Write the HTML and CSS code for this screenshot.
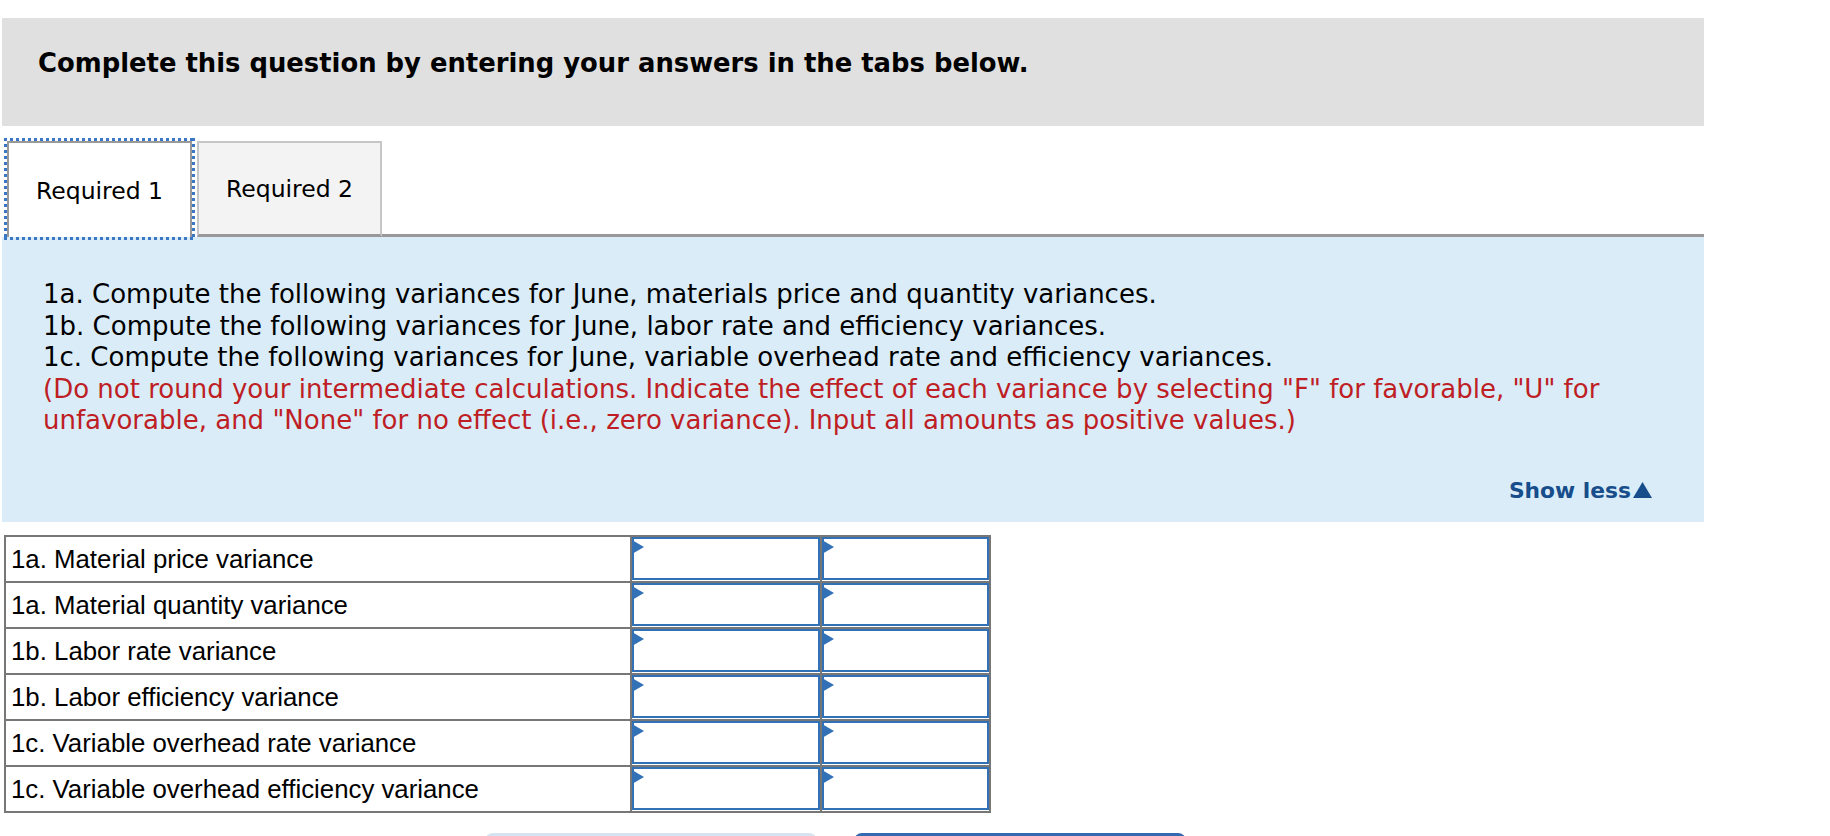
FILE: index.html
```html
<!DOCTYPE html>
<html>
<head>
<meta charset="utf-8">
<link rel="stylesheet" href="styles.css">
</head>
<body>
<div class="page">
  <div class="banner">
    <h1 class="banner-title">Complete this question by entering your answers in the tabs below.</h1>
  </div>

  <div class="tabs">
    <div class="tab tab-active"><span>Required 1</span></div>
    <div class="tab tab-inactive"><span>Required 2</span></div>
    <div class="tab-fill"></div>
  </div>

  <div class="panel">
    <div class="instructions">
      <p class="line">1a. Compute the following variances for June, materials price and quantity variances.</p>
      <p class="line">1b. Compute the following variances for June, labor rate and efficiency variances.</p>
      <p class="line">1c. Compute the following variances for June, variable overhead rate and efficiency variances.</p>
      <p class="line note">(Do not round your intermediate calculations. Indicate the effect of each variance by selecting "F" for favorable, "U" for unfavorable, and "None" for no effect (i.e., zero variance). Input all amounts as positive values.)</p>
    </div>
    <div class="show-less-row">
      <span class="show-less">Show less<svg class="arrow" width="19" height="16" viewBox="0 0 19 16"><polygon points="9.5,0 19,16 0,16" fill="#174d8a"/></svg></span>
    </div>
  </div>

  <table class="grid">
    <colgroup>
      <col class="c-label">
      <col class="c-amount">
      <col class="c-effect">
    </colgroup>
    <tbody>
      <tr><td class="label">1a. Material price variance</td><td class="input"><div class="box"><span class="flag"></span></div></td><td class="input"><div class="box"><span class="flag"></span></div></td></tr>
      <tr><td class="label">1a. Material quantity variance</td><td class="input"><div class="box"><span class="flag"></span></div></td><td class="input"><div class="box"><span class="flag"></span></div></td></tr>
      <tr><td class="label">1b. Labor rate variance</td><td class="input"><div class="box"><span class="flag"></span></div></td><td class="input"><div class="box"><span class="flag"></span></div></td></tr>
      <tr><td class="label">1b. Labor efficiency variance</td><td class="input"><div class="box"><span class="flag"></span></div></td><td class="input"><div class="box"><span class="flag"></span></div></td></tr>
      <tr><td class="label">1c. Variable overhead rate variance</td><td class="input"><div class="box"><span class="flag"></span></div></td><td class="input"><div class="box"><span class="flag"></span></div></td></tr>
      <tr><td class="label">1c. Variable overhead efficiency variance</td><td class="input"><div class="box"><span class="flag"></span></div></td><td class="input"><div class="box"><span class="flag"></span></div></td></tr>
    </tbody>
  </table>

  <div class="buttons">
    <div class="btn btn-prev"></div>
    <div class="btn btn-next"></div>
  </div>
</div>
</body>
</html>
```

FILE: styles.css
```css
* { box-sizing: border-box; }
html, body { margin: 0; padding: 0; background: #fff; }
body { font-family: "DejaVu Sans", Verdana, sans-serif; color: #000; overflow: hidden; height: 836px; }

.page {
  width: 1704px;
  padding: 18px 0 0 2px;
}

.banner {
  background: #e0e0e0;
  height: 108px;
  display: flex;
  align-items: center;
  padding-left: 36px;
  padding-bottom: 18px;
}
.banner-title {
  margin: 0;
  font-family: "DejaVu Sans", Verdana, sans-serif;
  font-weight: bold;
  font-size: 25.85px;
}

.tabs {
  display: flex;
  margin-top: 15px;
  height: 96px;
}
.tab {
  display: flex;
  align-items: center;
  justify-content: center;
  font-size: 23.5px;
  font-family: "DejaVu Sans", Verdana, sans-serif;
  padding-top: 1px;
}
.tab-active {
  width: 185px;
  margin-left: 5px;
  background: #fff;
  border: 2px solid #999;
  border-bottom: none;
  position: relative;
}
.tab-active::before {
  content: "";
  position: absolute;
  left: -5px;
  top: -5px;
  right: -5px;
  bottom: -3px;
  background:
    repeating-linear-gradient(90deg, #3a78c3 0 3px, transparent 3px 6px) top left / 100% 3px no-repeat,
    repeating-linear-gradient(90deg, #3a78c3 0 3px, transparent 3px 6px) bottom left / 100% 3px no-repeat,
    repeating-linear-gradient(180deg, #3a78c3 0 3px, transparent 3px 6px) top left / 3px 100% no-repeat,
    repeating-linear-gradient(180deg, #3a78c3 0 3px, transparent 3px 6px) top right / 3px 100% no-repeat;
  pointer-events: none;
}
.tab-inactive {
  width: 185px;
  margin-left: 5px;
  background: #f3f3f3;
  border: 2px solid #c6c6c6;
  border-bottom: 3px solid #999;
}
.tab-fill {
  flex: 1;
  border-bottom: 3px solid #999;
}

.panel {
  background: #d9ecf8;
  height: 285px;
  display: flex;
  flex-direction: column;
  padding: 42px 0 0 41px;
}
.instructions {
  font-family: "DejaVu Sans", Verdana, sans-serif;
  font-size: 26px;
  line-height: 31.5px;
  width: 1650px;
}
.line { margin: 0; }
.note { color: #be1e24; }

.show-less-row {
  display: flex;
  justify-content: flex-end;
  padding-right: 52px;
  margin-top: 41px;
}
.show-less {
  font-family: "DejaVu Sans", Verdana, sans-serif;
  font-weight: bold;
  font-size: 21.8px;
  color: #174d8a;
  display: flex;
  align-items: baseline;
}
.arrow { margin-left: 2px; }

.grid {
  border-collapse: collapse;
  margin: 13px 0 0 2px;
  table-layout: fixed;
  width: 985px;
}
.c-label { width: 626px; }
.c-amount { width: 190px; }
.c-effect { width: 169px; }
.grid td {
  border: 2.5px solid #777;
  height: 46px;
  padding: 0;
}
.label {
  font-family: "Liberation Sans", Arial, sans-serif;
  font-size: 25.8px;
  padding: 0 0 0 5px !important;
  vertical-align: middle;
}
.input { vertical-align: top; }
.box {
  height: 43px;
  border: 2px solid #3371b6;
  position: relative;
  background: #fff;
}
.flag {
  position: absolute;
  left: -2px;
  top: 1px;
  width: 0; height: 0;
  border-top: 7px solid transparent;
  border-bottom: 7px solid transparent;
  border-left: 12px solid #3371b6;
}

.buttons {
  display: flex;
  margin-top: 20px;
  padding-left: 483px;
  gap: 37px;
}
.btn {
  width: 332px;
  height: 40px;
  border-radius: 8px 8px 0 0;
}
.btn-prev { background: #d6e4f1; }
.btn-next { background: #3369b0; }
```
